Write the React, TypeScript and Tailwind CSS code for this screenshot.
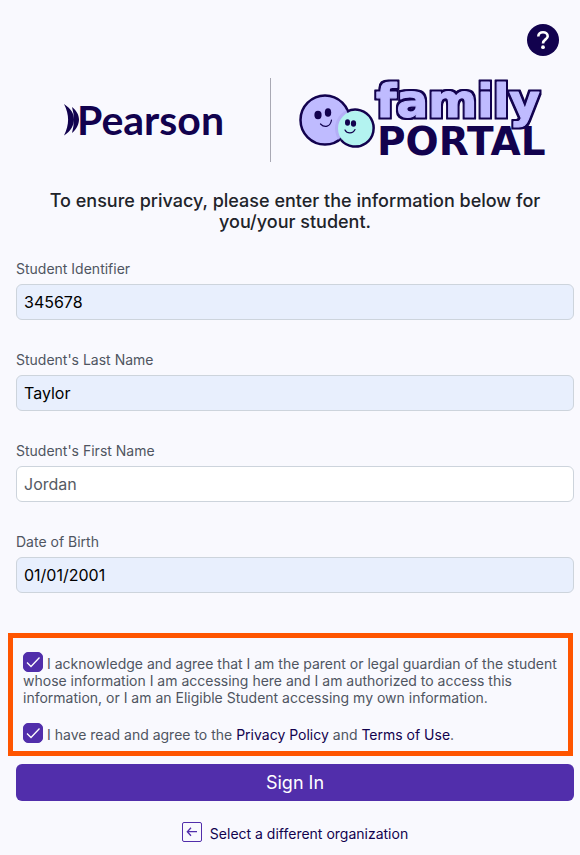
import type { ReactNode } from "react";

function PearsonLogo() {
  return (
    <svg className="h-[84px] w-[206px] shrink-0" viewBox="0 0 206 84" role="img" aria-label="Pearson">
      <g fill="#12024e">
        <path d="M0 26C7.500 31 10 36 10 41.500S7 53 0 57.500C5.500 46.500 5.500 37 0 26Z" />
        <path d="M8 29C13 33 15 37.500 15 41.500S13 51 8 55C10.500 46 10.500 37.500 8 29Z" />
        <text x="13" y="57" fontSize="41" fontWeight="700" fontFamily="Lato, 'Liberation Sans', sans-serif">
          Pearson
        </text>
      </g>
    </svg>
  );
}

function FamilyPortalLogo() {
  return (
    <svg className="-my-[10px] h-[104px] w-[252px] shrink-0" viewBox="0 -10 252 104" role="img" aria-label="Family Portal">
      <defs>
        <clipPath id="purple-face">
          <circle cx="26" cy="42" r="24" />
        </clipPath>
        <filter id="outline" x="-5%" y="-10%" width="110%" height="120%" colorInterpolationFilters="sRGB">
          <feMorphology in="SourceAlpha" operator="dilate" radius="2" result="grown" />
          <feFlood floodColor="#12024e" />
          <feComposite in2="grown" operator="in" />
          <feMerge>
            <feMergeNode />
            <feMergeNode in="SourceGraphic" />
          </feMerge>
        </filter>
      </defs>
      <circle cx="26" cy="42" r="24.500" fill="#bfbbff" stroke="#12024e" strokeWidth="2.500" />
      <g fill="#12024e">
        <ellipse cx="19" cy="37" rx="3.600" ry="4.200" />
        <ellipse cx="29" cy="34.500" rx="3.200" ry="4.300" />
      </g>
      <path d="M21.500 46C25.500 50 31.500 49 32.500 42" fill="none" stroke="#12024e" strokeWidth="1.200" strokeLinecap="round" />
      <circle cx="56.500" cy="50.500" r="20.500" fill="#aea6f0" opacity=".6" clipPath="url(#purple-face)" />
      <circle cx="56.500" cy="50.500" r="17.500" fill="#b3f3f0" />
      <path d="M48 33.500A18.500 18.500 0 1 1 42 62" fill="none" stroke="#12024e" strokeWidth="2.500" />
      <g fill="#12024e">
        <ellipse cx="48.500" cy="44.500" rx="2.500" ry="3.200" />
        <ellipse cx="54.500" cy="45.500" rx="2.600" ry="3.300" />
      </g>
      <path d="M46 52C48 56 54 56 56 51.500" fill="none" stroke="#12024e" strokeWidth="1.200" strokeLinecap="round" />
      <text x="78" y="77" fontSize="39" fontWeight="700" fontFamily="'DejaVu Sans', sans-serif" fill="#12024e">
        PORTAL
      </text>
      <text
        x="77"
        y="39"
        fontSize="47"
        fontWeight="700"
        fontFamily="'DejaVu Sans', sans-serif"
        fill="#bfbbff"
        stroke="#bfbbff"
        strokeWidth="1.200"
        strokeLinejoin="round"
        filter="url(#outline)"
      >
        family
      </text>
    </svg>
  );
}

type FieldProps = { id: string; label: string; value?: string; placeholder?: string };

function Field({ id, label, value, placeholder }: FieldProps) {
  return (
    <div className="flex flex-col gap-[5px]">
      <label htmlFor={id} className="text-sm leading-5 text-[#4f5561]">
        {label}
      </label>
      <input
        id={id}
        type="text"
        defaultValue={value}
        placeholder={placeholder}
        className="h-9 w-full rounded-md border border-[#cdd4dc] bg-[#e8effd] px-[7px] text-base text-black placeholder-shown:bg-white placeholder:text-[#555a63]"
      />
    </div>
  );
}

function Consent({ id, children }: { id: string; children: ReactNode }) {
  return (
    <div className="text-sm leading-[17px] text-[#4f5561]">
      <span className="relative -mt-2 mr-1 inline-block size-5 align-[-3px]">
        <input
          id={id}
          type="checkbox"
          defaultChecked
          className="peer block size-5 appearance-none rounded-[5px] border border-[#512eab] checked:bg-[#512eab]"
        />
        <svg
          className="pointer-events-none absolute inset-0 hidden size-5 peer-checked:block"
          viewBox="0 0 20 20"
          fill="none"
          stroke="white"
          strokeWidth="1.300"
          aria-hidden="true"
        >
          <path d="M4 10.500L8 14.500L16.500 5.500" />
        </svg>
      </span>
      <label htmlFor={id}>{children}</label>
    </div>
  );
}

export default function App() {
  return (
    <main className="min-h-screen bg-[#f9f9fe] pt-6 pr-[6px] pb-2 pl-4 font-['Inter','Liberation_Sans',sans-serif]">
      <div className="flex justify-end pr-[15px]">
        <button
          type="button"
          aria-label="Help"
          className="flex size-8 items-center justify-center rounded-full bg-[#12024e]"
        >
          <svg className="size-8" viewBox="0 0 32 32" fill="none" aria-hidden="true">
            <path
              d="M11.300 12.500C11.300 9.500 13.500 8.300 16 8.300S20.700 9.800 20.700 12.200C20.700 15.400 16 15.500 16 19.500"
              stroke="white"
              strokeWidth="2.600"
            />
            <circle cx="16" cy="23.200" r="1.900" fill="white" />
          </svg>
        </button>
      </div>

      <header className="mt-[22px] flex justify-center gap-7 pl-6">
        <div className="border-r border-[#a9a9b4]">
          <PearsonLogo />
        </div>
        <FamilyPortalLogo />
      </header>

      <h1 className="mx-auto mt-7 max-w-[500px] text-center text-lg leading-[21px] font-medium text-[#212329]">
        To ensure privacy, please enter the information below for you/your student.
      </h1>

      <form className="mt-[27px]" onSubmit={(e) => e.preventDefault()}>
        <div className="flex flex-col gap-[30px]">
          <Field id="student-id" label="Student Identifier" value="345678" />
          <Field id="last-name" label="Student's Last Name" value="Taylor" />
          <Field id="first-name" label="Student's First Name" placeholder="Jordan" />
          <Field id="birth-date" label="Date of Birth" value="01/01/2001" />
        </div>

        <div className="mt-10 mr-px -ml-2 flex flex-col gap-5 border-[5px] border-[#ff5500] px-[10px] pt-[17px] pb-2">
          <Consent id="guardian">
            I acknowledge and agree that I am the parent or legal guardian of the student whose information I am
            accessing here and I am authorized to access this information, or I am an Eligible Student accessing my own
            information.
          </Consent>
          <Consent id="terms">
            I have read and agree to the{" "}
            <a href="#privacy" className="text-[#12024e]">
              Privacy Policy
            </a>{" "}
            and{" "}
            <a href="#terms-of-use" className="text-[#12024e]">
              Terms of Use
            </a>
            .
          </Consent>
        </div>

        <button
          type="submit"
          className="mt-2 h-[37px] w-full rounded-md bg-[#512eab] text-center text-lg leading-[37px] text-white"
        >
          Sign In
        </button>
      </form>

      <div className="mt-[19px] flex justify-center">
        <a href="#organization" className="flex items-center gap-2 text-sm leading-5 text-[#12024e]">
          <svg className="size-5" viewBox="0 0 20 20" fill="none" stroke="#512eab" aria-hidden="true">
            <rect x="0.500" y="0.500" width="19" height="19" rx="1.500" />
            <path d="M15 9.700H5.500M9 5.700L5.300 9.700L9 13.700" strokeWidth="1.300" />
          </svg>
          <span className="pt-1">Select a different organization</span>
        </a>
      </div>
    </main>
  );
}
